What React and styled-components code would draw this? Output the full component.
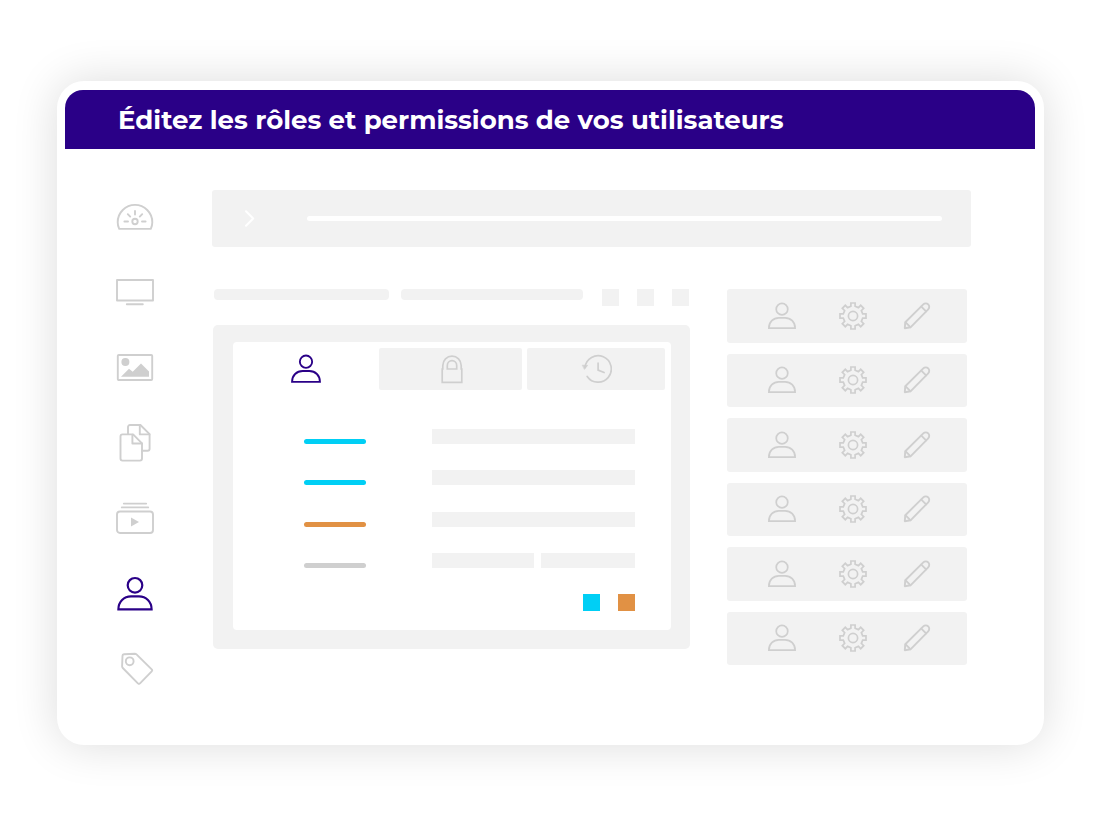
import React, { useState } from "react";
import styled, { createGlobalStyle } from "styled-components";

const PURPLE = "#2a0087";
const CYAN = "#00cff5";
const ORANGE = "#e19144";
const SILVER = "#cfcfcf";
const PALE = "#f2f2f2";

const menu = [
  { id: "dashboard", label: "Tableau de bord", Icon: GaugeIcon },
  { id: "screens", label: "Écrans", Icon: ScreenIcon },
  { id: "images", label: "Images", Icon: ImageIcon },
  { id: "documents", label: "Documents", Icon: DocumentsIcon },
  { id: "videos", label: "Vidéos", Icon: VideoIcon },
  { id: "users", label: "Utilisateurs", Icon: UserIcon },
  { id: "tags", label: "Étiquettes", Icon: TagIcon },
];

const tabs = [
  { id: "profile", label: "Profil", Icon: UserIcon },
  { id: "access", label: "Accès", Icon: LockIcon },
  { id: "history", label: "Historique", Icon: HistoryIcon },
];

const permissions = [
  { id: 1, color: CYAN, values: [203] },
  { id: 2, color: CYAN, values: [203] },
  { id: 3, color: ORANGE, values: [203] },
  { id: 4, color: SILVER, values: [102, 94] },
];

const users = [1, 2, 3, 4, 5, 6];

export default function App() {
  const [page, setPage] = useState("users");
  const [tab, setTab] = useState("profile");

  return (
    <Page>
      <GlobalStyle />
      <Window>
        <Header>
          <Title>Éditez les rôles et permissions de vos utilisateurs</Title>
        </Header>
        <Body>
          <Sidebar>
            {menu.map(({ id, label, Icon }) => (
              <MenuButton
                key={id}
                type="button"
                aria-label={label}
                $active={page === id}
                onClick={() => setPage(id)}
              >
                <Icon size={38} />
              </MenuButton>
            ))}
          </Sidebar>

          <Main>
            <Toolbar>
              <ChevronIcon />
              <ToolbarLine />
            </Toolbar>

            <Columns>
              <Editor>
                <EditorHead>
                  <HeadBars>
                    <HeadBar $grow={175} />
                    <HeadBar $grow={183} />
                  </HeadBars>
                  <Squares>
                    <Square $color={PALE} type="button" aria-label="Ajouter" />
                    <Square $color={PALE} type="button" aria-label="Trier" />
                    <Square $color={PALE} type="button" aria-label="Filtrer" />
                  </Squares>
                </EditorHead>

                <Frame>
                  <Panel>
                    <Tabs>
                      {tabs.map(({ id, label, Icon }) => (
                        <Tab
                          key={id}
                          type="button"
                          aria-label={label}
                          $active={tab === id}
                          onClick={() => setTab(id)}
                        >
                          <Icon size={32} />
                        </Tab>
                      ))}
                    </Tabs>

                    <Permissions>
                      {permissions.map(({ id, color, values }) => (
                        <Permission key={id}>
                          <PermissionName $color={color} />
                          <PermissionValues>
                            {values.map((grow) => (
                              <PermissionValue key={grow} $grow={grow} />
                            ))}
                          </PermissionValues>
                        </Permission>
                      ))}
                    </Permissions>

                    <Actions>
                      <Square
                        $color={CYAN}
                        type="button"
                        aria-label="Enregistrer"
                      />
                      <Square
                        $color={ORANGE}
                        type="button"
                        aria-label="Annuler"
                      />
                    </Actions>
                  </Panel>
                </Frame>
              </Editor>

              <UserList>
                {users.map((id) => (
                  <UserCard key={id}>
                    <CardButton type="button" aria-label="Utilisateur">
                      <UserIcon size={30} />
                    </CardButton>
                    <CardButton type="button" aria-label="Réglages">
                      <GearIcon />
                    </CardButton>
                    <CardButton type="button" aria-label="Modifier">
                      <PencilIcon />
                    </CardButton>
                  </UserCard>
                ))}
              </UserList>
            </Columns>
          </Main>
        </Body>
      </Window>
    </Page>
  );
}

function GaugeIcon({ size }) {
  return (
    <Svg width={size} height={size} viewBox="0 0 38 38">
      <path d="M3.2 29.9C2.2 27.8 1.7 25.6 1.7 23.2a17.3 17.3 0 0 1 34.6 0c0 2.4-.5 4.6-1.5 6.7z" />
      <circle cx="19" cy="22.5" r="2.7" />
      <path d="M8.4 22.5h3.6M26 22.5h3.6M19 12v3.6M11.8 15.2l2.4 2.4M26.2 15.2l-2.4 2.4" />
    </Svg>
  );
}

function ScreenIcon({ size }) {
  return (
    <Svg width={size} height={size} viewBox="0 0 38 38">
      <rect x="1" y="6" width="36" height="20.5" />
      <path d="M10.8 30.3h16" />
    </Svg>
  );
}

function ImageIcon({ size }) {
  return (
    <Svg width={size} height={size} viewBox="0 0 38 38">
      <rect x="1.8" y="6" width="34.4" height="25" rx="1" />
      <circle cx="9.4" cy="13" r="4" fill="currentColor" stroke="none" />
      <path
        d="M5 27.7l8-8 3.7 3 8.3-8.3 8 8v5.3z"
        fill="currentColor"
        stroke="none"
      />
    </Svg>
  );
}

function DocumentsIcon({ size }) {
  return (
    <Svg width={size} height={size} viewBox="0 0 38 38">
      <path d="M6.5 10.4h10.6l8.9 9v15.2a2 2 0 0 1-2 2H6.5a2 2 0 0 1-2-2V12.4a2 2 0 0 1 2-2z" />
      <path d="M16.4 10.6v8.9H26" />
      <path d="M12 10V3a2 2 0 0 1 2-2h10.4l9.2 9.2v14.6a2 2 0 0 1-2 2H26" />
      <path d="M23.8 1.2v9.2h9.6" />
    </Svg>
  );
}

function VideoIcon({ size }) {
  return (
    <Svg width={size} height={size} viewBox="0 0 38 38">
      <path d="M7.8 3.6h22.4M5.8 7.4h26.4" />
      <rect x="1" y="11.5" width="36" height="21.5" rx="3" />
      <path d="M15 17.6l8 4.5-8 4.5z" fill="currentColor" stroke="none" />
    </Svg>
  );
}

function UserIcon({ size }) {
  return (
    <Svg width={size} height={size} viewBox="0 0 38 38" $weight={2.2}>
      <circle cx="19" cy="10.3" r="7.3" />
      <path
        d="M2.4 34.3C2.4 26.5 8 21.4 15 21.4h8c7 0 12.6 5.1 12.6 12.9z"
        strokeLinejoin="miter"
      />
    </Svg>
  );
}

function TagIcon({ size }) {
  return (
    <Svg width={size} height={size} viewBox="0 0 38 38">
      <path d="M8 4.2l10.8-.5c.7 0 1.2.2 1.7.7l15.2 15c.7.7.7 1.2 0 1.9L24 33.4c-.7.7-1.4.7-2.1 0L6.8 18c-.5-.5-.7-1-.7-1.7l.4-10.6c0-1 .5-1.4 1.5-1.5z" />
      <circle cx="13.7" cy="11.3" r="3.9" />
    </Svg>
  );
}

function LockIcon({ size }) {
  return (
    <Svg width={size} height={size} viewBox="0 0 32 32" $weight={1.7}>
      <path
        d="M7.8 16v-3.6a9.2 9.2 0 0 1 18.4 0V16h.6v13.4H7.2V16z"
        strokeLinejoin="miter"
      />
      <path
        d="M12.3 16v-3.6a4.7 4.7 0 0 1 9.4 0V16z"
        strokeLinejoin="miter"
      />
    </Svg>
  );
}

function HistoryIcon({ size }) {
  return (
    <Svg width={size} height={size} viewBox="0 0 32 32" $weight={1.7}>
      <path d="M5 14.3A13.2 13.2 0 1 1 7.2 23.4" />
      <path
        d="M2.6 12.2l5 .2-3 3.8z"
        fill="currentColor"
        strokeWidth="0.6"
      />
      <path d="M18.1 10.2v6.9l6 2.4" strokeLinejoin="miter" />
    </Svg>
  );
}

function GearIcon() {
  // one tooth every 45 degrees
  const points = [];
  for (let i = 0; i < 8; i++) {
    const angle = (i * Math.PI) / 4;
    const sin = Math.sin(angle);
    const cos = Math.cos(angle);
    [
      [-2.1, -9.7],
      [-2.1, -13],
      [2.1, -13],
      [2.1, -9.7],
    ].forEach(([x, y]) => {
      points.push(`${15 + x * cos - y * sin},${15 + x * sin + y * cos}`);
    });
  }

  return (
    <Svg width="30" height="30" viewBox="0 0 30 30" $weight={1.7}>
      <polygon points={points.join(" ")} strokeLinejoin="miter" />
      <circle cx="15" cy="15" r="4.6" />
    </Svg>
  );
}

function PencilIcon() {
  return (
    <Svg width="30" height="30" viewBox="0 0 30 30" $weight={1.9}>
      <path d="M2.8 27.2l.5-6L21.3 3.4a3.4 3.4 0 0 1 4.9 4.9L8.5 26.3z" />
      <path d="M3.6 21.4l4.8 4.8M19.3 5.6l4.8 4.8" />
    </Svg>
  );
}

function ChevronIcon() {
  return (
    <Svg width="12" height="18" viewBox="0 0 12 18" $weight={2}>
      <path d="M2 1.2L9.2 8.5 2 15.8" />
    </Svg>
  );
}

const GlobalStyle = createGlobalStyle`
  * {
    box-sizing: border-box;
  }

  body {
    margin: 0;
    background: #fff;
    font-family: Montserrat, Inter, sans-serif;
  }

  button {
    padding: 0;
    border: 0;
    background: none;
    cursor: pointer;
  }
`;

const Svg = styled.svg`
  display: block;
  flex: none;
  fill: none;
  stroke: currentColor;
  stroke-width: ${({ $weight }) => $weight || 1.9};
  stroke-linecap: round;
  stroke-linejoin: round;
`;

const Page = styled.div`
  padding: 81px 56px 81px 57px;
`;

const Window = styled.div`
  padding: 9px 9px 0 8px;
  border-radius: 27px;
  background: #fff;
  box-shadow: 0 0 46px rgba(0, 0, 0, 0.14);
`;

const Header = styled.header`
  display: flex;
  align-items: center;
  min-height: 59px;
  padding: 0 53px;
  border-radius: 18px 18px 0 0;
  background: ${PURPLE};
`;

const Title = styled.h1`
  margin: 0;
  color: #fff;
  font-size: 26px;
  font-weight: 700;
  line-height: 36px;
`;

const Body = styled.div`
  display: flex;
  align-items: flex-start;
  gap: 58px;
  padding: 31px 64px 38px 51px;
`;

const Sidebar = styled.nav`
  display: grid;
  flex: none;
  grid-auto-rows: 1fr;
  width: 38px;
  min-height: 527px;
`;

const MenuButton = styled.button`
  display: flex;
  align-items: center;
  color: ${({ $active }) => ($active ? PURPLE : SILVER)};
`;

const Main = styled.main`
  flex: 1;
  min-width: 0;
  padding-top: 10px;
`;

const Toolbar = styled.div`
  display: flex;
  align-items: center;
  gap: 51px;
  height: 57px;
  padding: 0 29px 0 32px;
  border-radius: 3px;
  background: ${PALE};
  color: #fff;
`;

const ToolbarLine = styled.div`
  flex: 1;
  height: 5px;
  border-radius: 3px;
  background: #fff;
`;

const Columns = styled.div`
  display: grid;
  grid-template-columns: minmax(0, 1fr) 240px;
  align-items: start;
  gap: 37px;
  margin-top: 42px;
  padding: 0 4px 0 1px;
`;

const Editor = styled.section`
  display: flex;
  flex-direction: column;
  gap: 19px;
`;

const EditorHead = styled.div`
  display: flex;
  gap: 19px;
  padding: 0 1px;
`;

const HeadBars = styled.div`
  display: flex;
  flex: 1;
  gap: 12px;
`;

const HeadBar = styled.div`
  flex: ${({ $grow }) => $grow} 1 0;
  height: 11px;
  border-radius: 4px;
  background: ${PALE};
`;

const Squares = styled.div`
  display: flex;
  gap: 18px;
`;

const Square = styled.button`
  && {
    width: 17px;
    height: 17px;
    background: ${({ $color }) => $color};
  }
`;

const Frame = styled.div`
  padding: 17px 19px 19px 20px;
  border-radius: 5px;
  background: ${PALE};
`;

const Panel = styled.div`
  padding-bottom: 19px;
  border-radius: 4px;
  background: #fff;
`;

const Tabs = styled.div`
  display: grid;
  grid-template-columns: 136fr 143fr 138fr;
  gap: 5px;
  padding: 6px 6px 0 5px;
`;

const Tab = styled.button`
  display: flex;
  align-items: center;
  justify-content: center;
  height: 42px;
  border-radius: 2px;
  background: ${({ $active }) => ($active ? "#fff" : PALE)};
  color: ${({ $active }) => ($active ? PURPLE : SILVER)};
`;

const Permissions = styled.div`
  display: flex;
  flex-direction: column;
  justify-content: space-between;
  min-height: 139px;
  margin-top: 39px;
  padding: 0 36px 0 71px;
`;

const Permission = styled.div`
  display: flex;
  align-items: flex-end;
  gap: 66px;
`;

const PermissionName = styled.div`
  width: 62px;
  height: 5px;
  border-radius: 3px;
  background: ${({ $color }) => $color};
`;

const PermissionValues = styled.div`
  display: flex;
  flex: 1;
  gap: 7px;
`;

const PermissionValue = styled.div`
  flex: ${({ $grow }) => $grow} 1 0;
  height: 15px;
  background: ${PALE};
`;

const Actions = styled.div`
  display: flex;
  justify-content: flex-end;
  gap: 18px;
  margin-top: 26px;
  padding-right: 36px;
`;

const UserList = styled.ul`
  display: grid;
  grid-auto-rows: 1fr;
  gap: 11px;
  min-height: 376px;
  margin: 0;
  padding: 0;
  list-style: none;
`;

const UserCard = styled.li`
  display: grid;
  grid-template-columns: 71fr 64fr 30fr;
  align-items: center;
  justify-items: start;
  padding: 0 35px 0 40px;
  border-radius: 3px;
  background: ${PALE};
`;

const CardButton = styled.button`
  color: ${SILVER};
`;
